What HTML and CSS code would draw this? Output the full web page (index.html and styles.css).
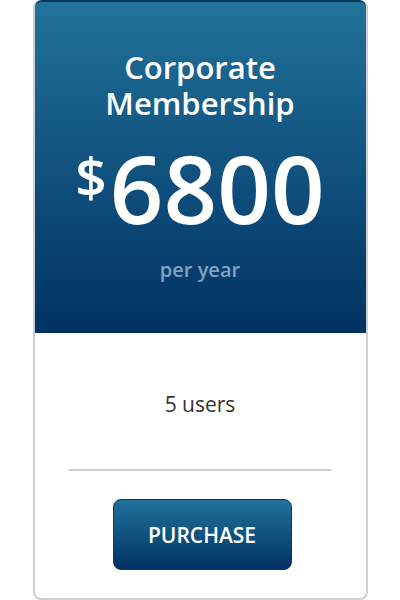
FILE: index.html
```html
<!DOCTYPE html>
<html>
<head>
	<meta charset="utf-8">
	<title>Corporate Membership</title>
	<link rel="stylesheet" href="styles.css">
</head>
<body>
	<div id="card">
		<div id="top">
			<h2 class="plan">Corporate Membership</h2>
			<div class="price"><span class="dollar">$</span>6800</div>
			<div class="period">per year</div>
		</div>
		<div id="bottom">
			<div class="users">5 users</div>
			<hr class="line">
			<button class="buy">PURCHASE</button>
		</div>
	</div>
</body>
</html>
```

FILE: styles.css
```css
	body{
		margin: 0;
		background-color: #fff;
		font-family: "Open Sans", sans-serif;
	}
	#card
	{
		box-sizing: border-box;
		width: 335px;
		height: 600px;
		margin: 0 auto;
		border: 2px solid #cfcfcf;
		border-top: 0;
		border-radius: 8px;
		overflow: hidden;
		display: flex;
		flex-direction: column;
	}
	#top
	{
		height: 333px;
		margin: 0 -2px;
		border: 2px solid #0c3a5c;
		border-bottom: 0;
		border-radius: 8px 8px 0 0;
		box-sizing: border-box;
		background: linear-gradient(#21729a, #003264);
		color: #fff;
		text-align: center;
		padding-top: 47px;
	}
	.plan
	{
		margin: 0 auto;
		width: 270px;
		font-size: 31px;
		font-weight: 600;
		line-height: 36px;
	}
	.price
	{
		margin-top: 19px;
		font-size: 94px;
		font-weight: 600;
		line-height: 96px;
	}
	.dollar
	{
		font-size: 55px;
		line-height: 0;
		vertical-align: 27px;
		margin-right: 3px;
	}
	.period
	{
		margin-top: 20px;
		font-size: 20px;
		font-weight: 600;
		color: #7fa3c0;
	}
	#bottom
	{
		flex: 1;
		display: flex;
		flex-direction: column;
		align-items: center;
		padding-top: 57px;
	}
	.users
	{
		font-size: 21px;
		color: #333;
		line-height: 28px;
	}
	.line
	{
		width: 262px;
		margin: 51px 0 0 0;
		border: 0;
		height: 2px;
		background: #cfcfcf;
	}
	.buy
	{
		margin-top: 28px;
		margin-left: 4px;
		width: 179px;
		height: 71px;
		border: 1px solid #0c3a5c;
		border-radius: 8px;
		background: linear-gradient(#21729a, #003264);
		color: #fff;
		font-family: "Open Sans", sans-serif;
		font-size: 21px;
		font-weight: 600;
		cursor: pointer;
	}
```
